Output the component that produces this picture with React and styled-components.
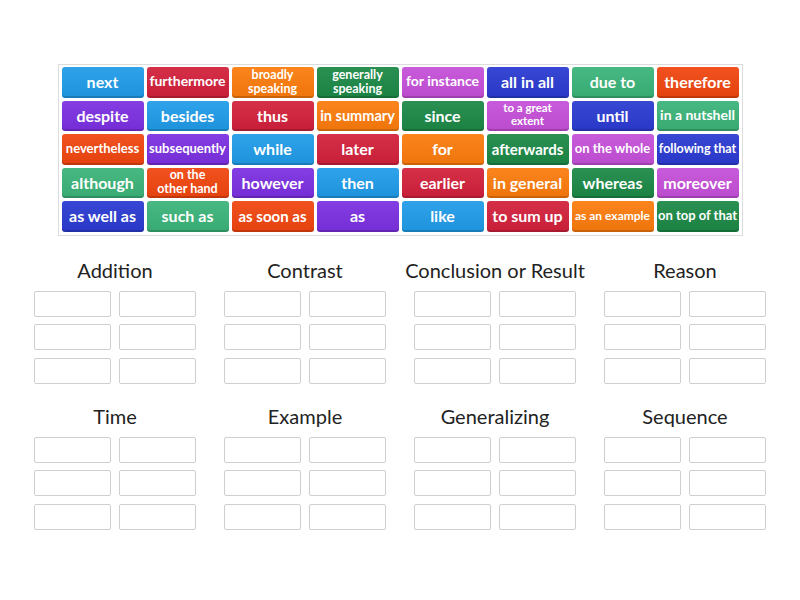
import React from 'react';
import styled, { createGlobalStyle } from 'styled-components';

const GlobalStyle = createGlobalStyle`
  html, body {
    margin: 0;
    padding: 0;
    background: #fff;
  }
  body {
    font-family: "Lato", "Open Sans", sans-serif;
  }
`

const colors = {
  blue: '#1f9be8',
  red: '#d2203b',
  orange: '#fb7b0c',
  darkGreen: '#1b8846',
  magenta: '#c44fd8',
  darkBlue: '#2a3ad0',
  teal: '#3ab378',
  redOrange: '#f0450e',
  violet: '#7b2fe0',
}

const cycle = ['blue', 'red', 'orange', 'darkGreen', 'magenta', 'darkBlue', 'teal', 'redOrange', 'violet']

// [text, font size]
const words = [
  ['next', 16], ['furthermore', 14], ['broadly speaking', 12.5], ['generally speaking', 12.5],
  ['for instance', 14], ['all in all', 16], ['due to', 16], ['therefore', 16],
  ['despite', 16], ['besides', 16], ['thus', 16], ['in summary', 14.5],
  ['since', 16], ['to a great extent', 11.5], ['until', 16], ['in a nutshell', 14],
  ['nevertheless', 13], ['subsequently', 13], ['while', 16], ['later', 16],
  ['for', 16], ['afterwards', 15], ['on the whole', 13], ['following that', 12.5],
  ['although', 16], ['on the other hand', 12.5], ['however', 16], ['then', 16],
  ['earlier', 16], ['in general', 16], ['whereas', 16], ['moreover', 16],
  ['as well as', 16], ['such as', 16], ['as soon as', 15], ['as', 16],
  ['like', 16], ['to sum up', 16], ['as an example', 12], ['on top of that', 13],
]

const twoLine = {
  'broadly speaking': ['broadly', 'speaking'],
  'generally speaking': ['generally', 'speaking'],
  'to a great extent': ['to a great', 'extent'],
  'on the other hand': ['on the', 'other hand'],
}

const groups = ['Addition', 'Contrast', 'Conclusion or Result', 'Reason', 'Time', 'Example', 'Generalizing', 'Sequence']

const App = () => {
  return (
    <>
      <GlobalStyle />
      <Page>
        <Bank>
          {words.map(([text, size], i) => (
            <Tile key={text} $color={colors[cycle[i % cycle.length]]} $size={size} $wrap={!!twoLine[text]}>
              {twoLine[text] ? (
                <span>{twoLine[text][0]}<br />{twoLine[text][1]}</span>
              ) : (
                <span>{text}</span>
              )}
            </Tile>
          ))}
        </Bank>
        <Groups>
          {groups.map((title) => (
            <Group key={title}>
              <GroupTitle>{title}</GroupTitle>
              <Slots>
                {Array.from({ length: 6 }).map((_, n) => (
                  <Slot key={n} />
                ))}
              </Slots>
            </Group>
          ))}
        </Groups>
      </Page>
    </>
  )
}

const Page = styled.main`
  width: 800px;
  height: 600px;
  padding-top: 64px;
  box-sizing: border-box;
  display: flex;
  flex-direction: column;
  align-items: center;
`

const Bank = styled.section`
  display: grid;
  grid-template-columns: repeat(8, 82px);
  grid-auto-rows: 30.5px;
  column-gap: 3px;
  row-gap: 3px;
  padding: 2px 3px 3px 3px;
  border: 1px solid #dcdcdc;
`

const Tile = styled.div`
  display: flex;
  align-items: center;
  justify-content: center;
  text-align: center;
  border-radius: 3px;
  background: linear-gradient(rgba(255, 255, 255, 0.07), rgba(0, 0, 0, 0.05)), ${(p) => p.$color};
  box-shadow: inset 0 -2px 0 rgba(0, 0, 0, 0.16);
  color: #fff;
  font-weight: 700;
  font-size: ${(p) => p.$size}px;
  line-height: ${(p) => (p.$wrap ? 1.12 : 1.2)};
  padding-bottom: 1px;
  white-space: nowrap;
  overflow: hidden;
`

const Groups = styled.section`
  margin-top: 22px;
  display: grid;
  grid-template-columns: repeat(4, 162px);
  column-gap: 28px;
  row-gap: 20px;
`

const Group = styled.div`
  display: flex;
  flex-direction: column;
  align-items: center;
`

const GroupTitle = styled.h2`
  margin: 0 0 9px 0;
  height: 24px;
  line-height: 24px;
  font-size: 20px;
  font-weight: 400;
  color: #222;
  white-space: nowrap;
`

const Slots = styled.div`
  display: grid;
  grid-template-columns: repeat(2, 77px);
  grid-auto-rows: 26px;
  column-gap: 8px;
  row-gap: 7.5px;
`

const Slot = styled.div`
  border: 1px solid #cfcfcf;
  border-radius: 2px;
  box-sizing: border-box;
`

export default App
